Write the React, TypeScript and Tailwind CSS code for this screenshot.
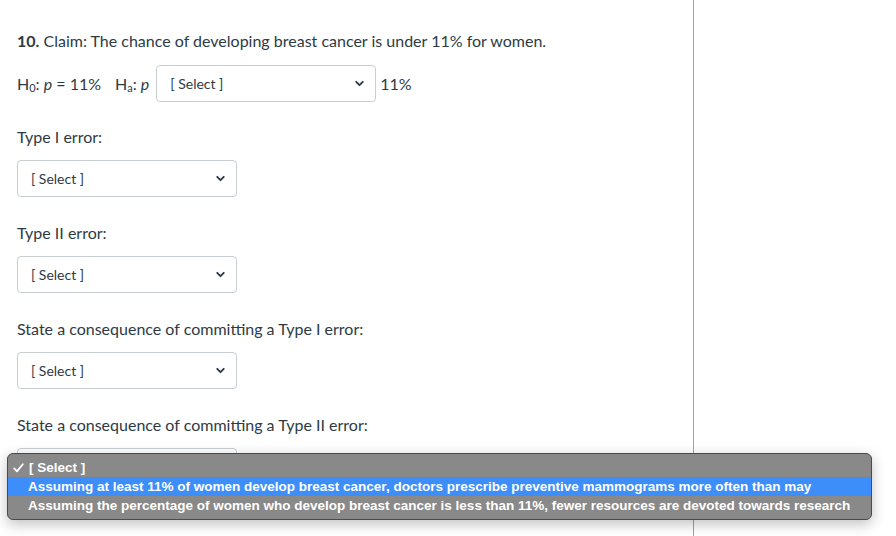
import { ChevronDown } from "lucide-react";

const lato = { fontFamily: "Lato, 'Open Sans', sans-serif" };

function SelectBox({ className = "" }: { className?: string }) {
  return (
    <div
      className={`flex h-[37px] w-[220px] items-center justify-between rounded-[4px] border border-[#c7cdd1] bg-white pl-[13px] pr-[9px] text-[14px] text-[#2d3b45] ${className}`}
    >
      <span>[ Select ]</span>
      <ChevronDown className="h-[13px] w-[13px] text-[#2d3b45]" strokeWidth={3.5} />
    </div>
  );
}

function Field({ label }: { label: string }) {
  return (
    <div className="mb-[24px]">
      <p className="mb-[11px] text-[16px] leading-[24px]">{label}</p>
      <SelectBox />
    </div>
  );
}

const options = [
  "Assuming at least 11% of women develop breast cancer, doctors prescribe preventive mammograms more often than may",
  "Assuming the percentage of women who develop breast cancer is less than 11%, fewer resources are devoted towards research",
];

export default function App() {
  return (
    <div className="relative flex h-[536px] w-[896px] overflow-hidden bg-white text-[#2d3b45]" style={lato}>
      <div className="w-[694px] shrink-0 border-r border-[#a3a3a3] pl-[17px] pt-[29px]">
        <p className="text-[16px] leading-[24px]">
          <span className="font-bold">10.</span> Claim: The chance of developing breast cancer is under 11% for women.
        </p>
        <div className="mt-[12px] mb-[23px] flex items-center text-[16px]">
          <span>
            H<sub className="text-[11px]">0</sub>: <i>p</i> = 11%
          </span>
          <span className="ml-[14px] mr-[7px]">
            H<sub className="text-[11px]">a</sub>: <i>p</i>
          </span>
          <SelectBox />
          <span className="ml-[4px]">11%</span>
        </div>
        <Field label="Type I error:" />
        <Field label="Type II error:" />
        <Field label="State a consequence of committing a Type I error:" />
        <Field label="State a consequence of committing a Type II error:" />
      </div>

      <div
        className="absolute left-[7px] top-[453px] w-[865px] rounded-[6px] border border-[#4a4a4a] bg-[#898989] pt-[4px] pb-[4px] text-[13.5px] font-bold leading-[19px] text-white shadow-[0_4px_14px_rgba(0,0,0,0.25)]"
        style={{ fontFamily: "'Liberation Sans', Arial, sans-serif" }}
      >
        <div className="flex items-center pl-[5px]">
          <svg width="11" height="10" viewBox="0 0 11 10" className="mr-[5px]" aria-hidden>
            <path d="M1.2 5.4 L4 8.4 L9.8 1.2" fill="none" stroke="white" strokeWidth="1.8" strokeLinecap="round" strokeLinejoin="round" />
          </svg>
          <span>[ Select ]</span>
        </div>
        {options.map((o, i) => (
          <div key={o} className={`pl-[20px] ${i === 0 ? "bg-[#3d8ef8]" : ""}`}>
            {o}
          </div>
        ))}
      </div>
    </div>
  );
}
